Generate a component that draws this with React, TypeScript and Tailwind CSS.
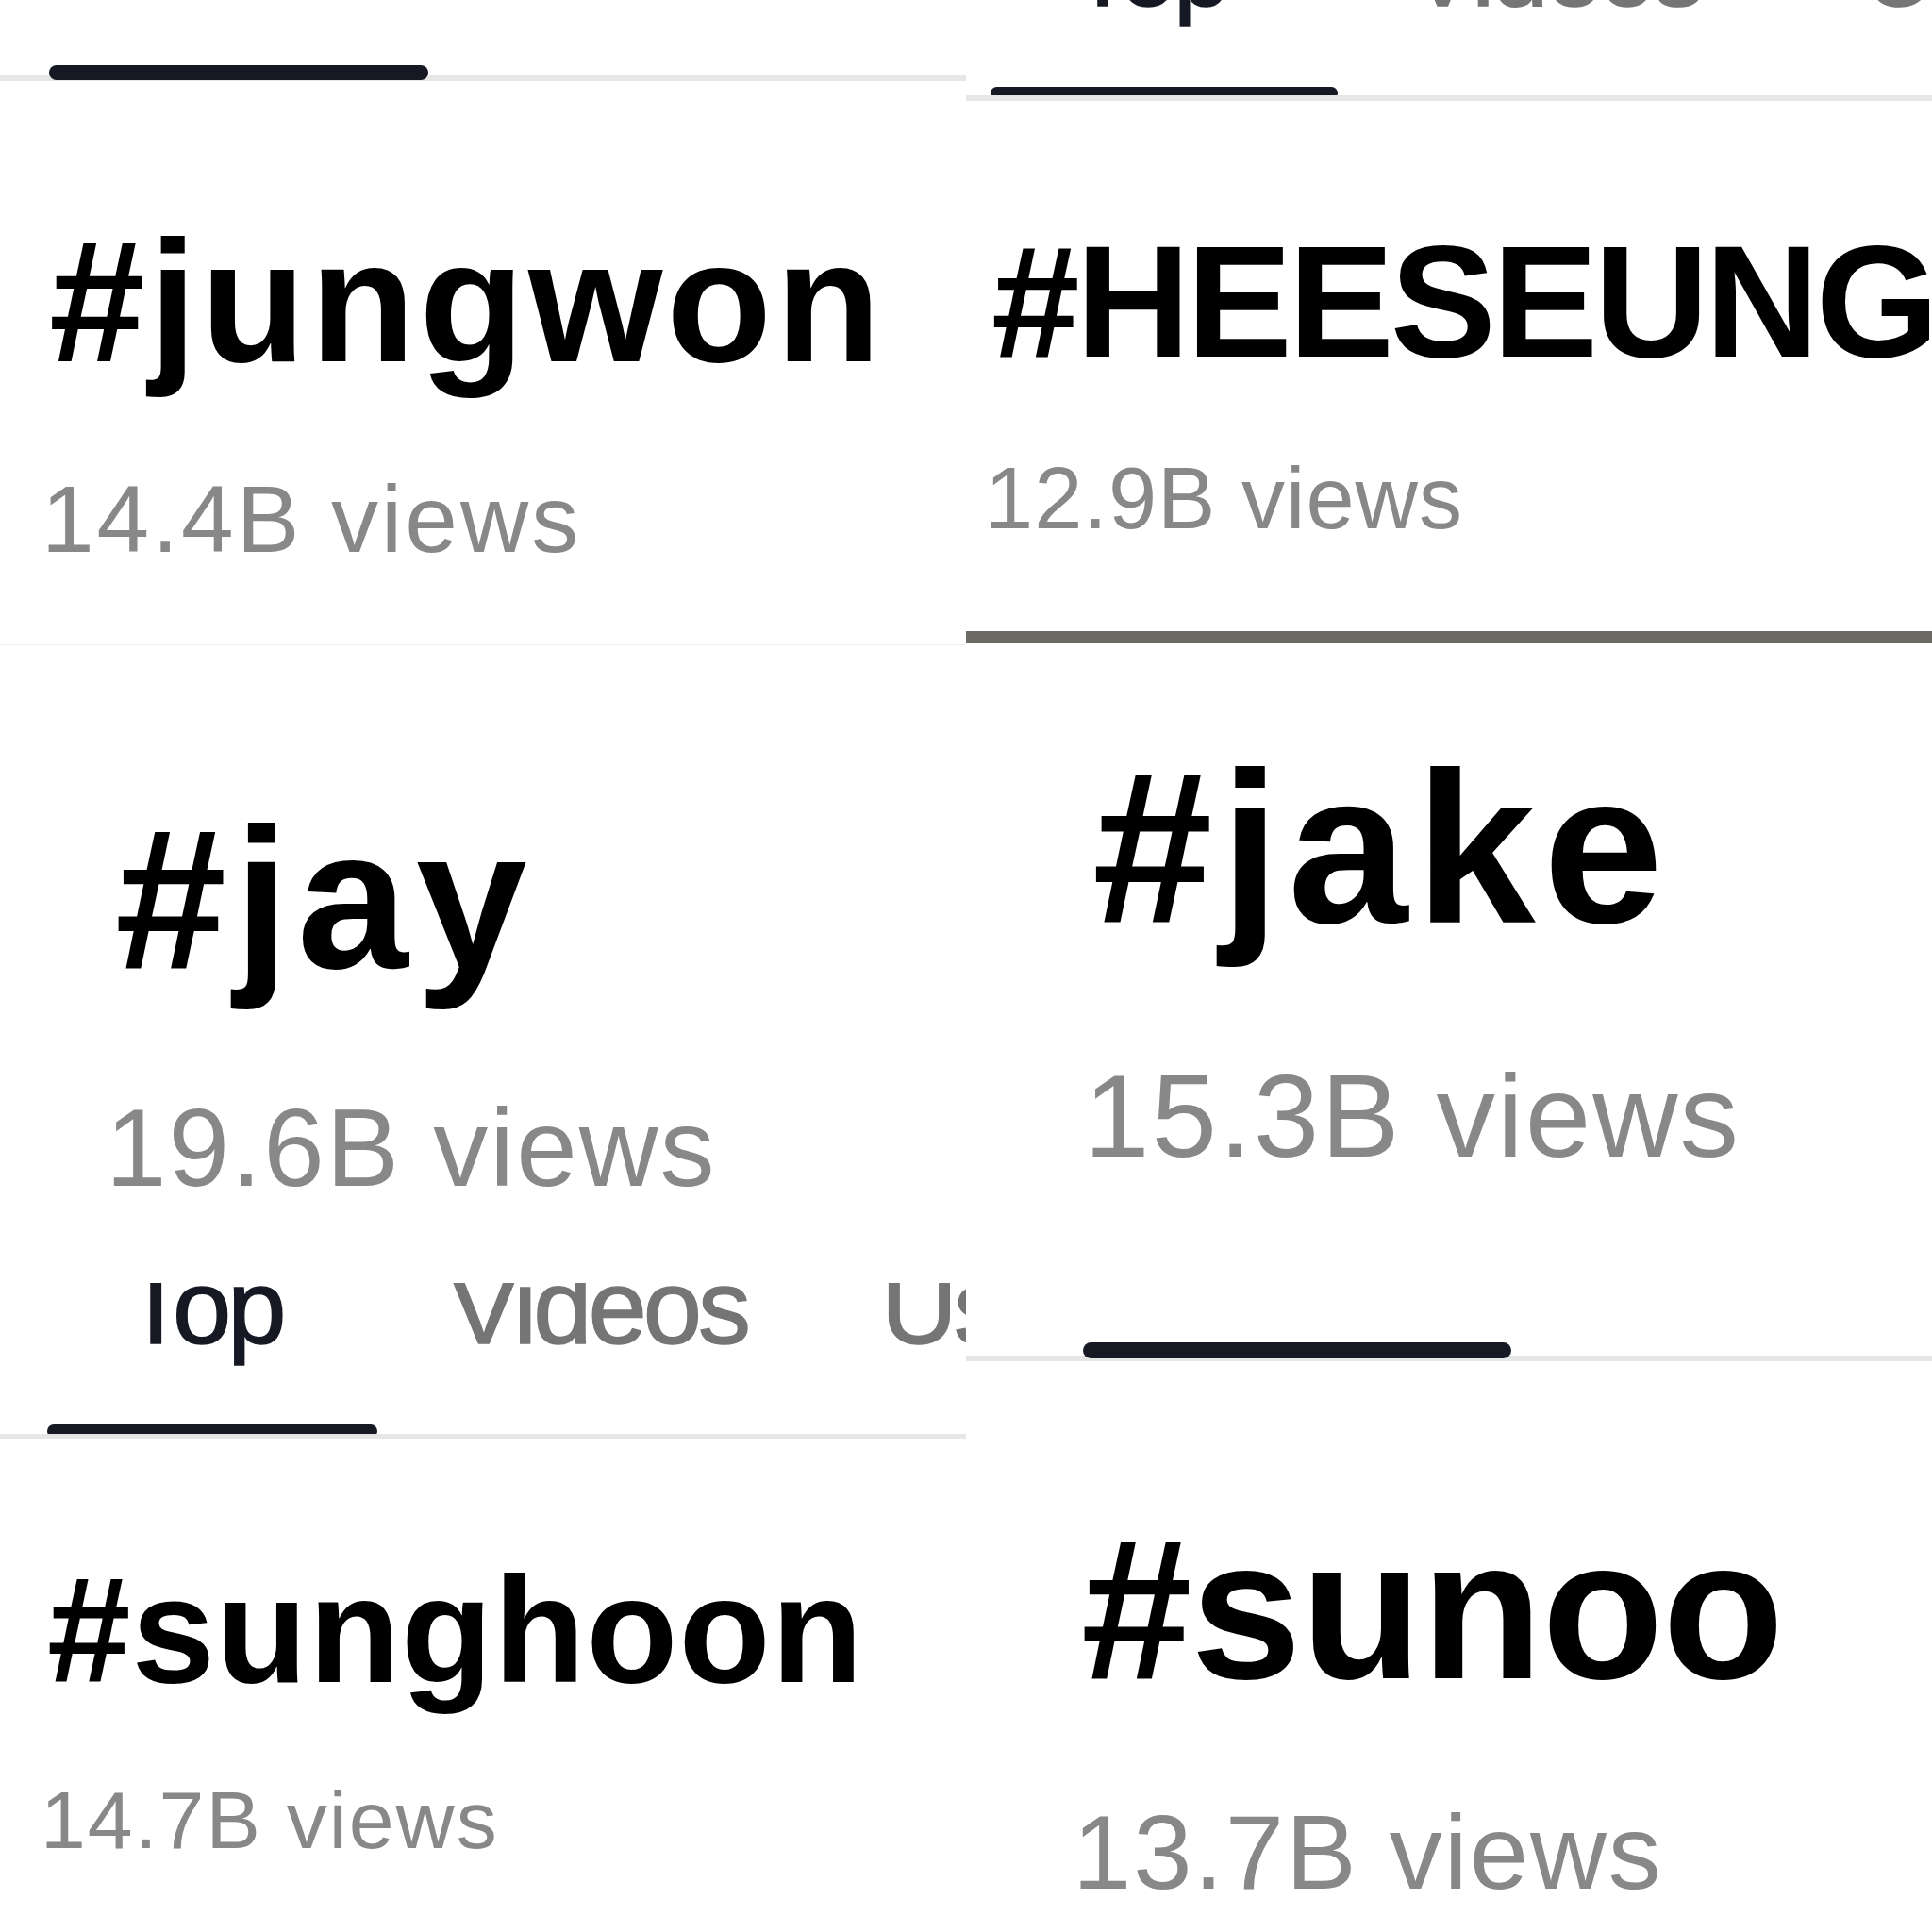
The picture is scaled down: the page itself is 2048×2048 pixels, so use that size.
import React from 'react';

const sans = "font-['Liberation_Sans',Arial,sans-serif]";

function Indicator({ className }: { className: string }) {
  return <div className={`absolute rounded-full bg-[#161823] ${className}`} />;
}

export default function App() {
  return (
    <div className={`w-[2048px] h-[2048px] bg-white grid grid-cols-2 overflow-hidden ${sans}`}>
      {/* left column */}
      <div className="flex flex-col overflow-hidden">
        <div className="h-[684px] border-b border-[#f0f0f0] flex flex-col">
          <div className="relative h-[86px] border-b-[6px] border-[#e6e6e6]">
            <Indicator className="left-[52px] top-[69px] w-[402px] h-[16px]" />
          </div>
          <h2 className="mt-[142px] pl-[52px] text-[183px] leading-none font-bold text-black tracking-[4px] whitespace-nowrap">#jungwon</h2>
          <p className="mt-[89px] pl-[44px] text-[100px] leading-none text-[#888] tracking-[3px] whitespace-nowrap">14.4B views</p>
        </div>

        <div className="h-[841px] flex flex-col">
          <h2 className="mt-[163px] pl-[122px] text-[212px] leading-none font-bold text-black tracking-[8px] whitespace-nowrap">#jay</h2>
          <p className="mt-[100px] pl-[112px] text-[116px] leading-none text-[#888] tracking-[2px] whitespace-nowrap">19.6B views</p>
          <div className="relative mt-[85px] h-[165px] overflow-hidden border-b-[5px] border-[#e6e6e6]">
            <div className="flex -mt-[30px] pl-[131px] text-[112px] leading-none tracking-[-4px] whitespace-nowrap">
              <span className="text-[#161823] [-webkit-text-stroke:1.5px_#161823]">Top</span>
              <span className="ml-[176px] text-[#757575] [-webkit-text-stroke:1.5px_#757575]">Videos</span>
              <span className="ml-[142px] text-[#757575] [-webkit-text-stroke:1.5px_#757575]">Users</span>
            </div>
            <Indicator className="left-[50px] top-[150px] w-[350px] h-[14px]" />
          </div>
        </div>

        <div className="h-[523px] flex flex-col">
          <h2 className="mt-[124px] pl-[50px] text-[159px] leading-none font-bold text-black tracking-[1px] whitespace-nowrap">#sunghoon</h2>
          <p className="mt-[78px] pl-[43px] text-[86px] leading-none text-[#888] tracking-[2px] whitespace-nowrap">14.7B views</p>
        </div>
      </div>

      {/* right column */}
      <div className="flex flex-col overflow-hidden">
        <div className="h-[682px] flex flex-col">
          <div className="relative h-[107px] overflow-hidden border-b-[6px] border-[#e6e6e6]">
            <div className="flex -mt-[85px] pl-[112px] text-[108px] leading-none tracking-[-3px] whitespace-nowrap">
              <span className="text-[#161823] [-webkit-text-stroke:1.5px_#161823]">Top</span>
              <span className="ml-[192px] text-[#757575] [-webkit-text-stroke:1.5px_#757575]">Videos</span>
              <span className="ml-[171px] text-[#757575] [-webkit-text-stroke:1.5px_#757575]">Users</span>
            </div>
            <Indicator className="left-[26px] top-[92px] w-[368px] h-[13px]" />
          </div>
          <h2 className="mt-[129px] pl-[27px] text-[168px] leading-none font-bold text-black tracking-[-4px] whitespace-nowrap">#HEESEUNG</h2>
          <p className="mt-[78px] pl-[20px] text-[92px] leading-none text-[#888] tracking-[1px] whitespace-nowrap">12.9B views</p>
          <div className="mt-auto h-[13px] bg-[#6b6a65]" />
        </div>

        <div className="h-[761px] flex flex-col">
          <h2 className="mt-[103px] pl-[134px] text-[229px] leading-none font-bold text-black tracking-[8px] whitespace-nowrap">#jake</h2>
          <p className="mt-[106px] pl-[125px] text-[125px] leading-none text-[#888] tracking-[2px] whitespace-nowrap">15.3B views</p>
          <div className="relative mt-auto h-[30px] border-b-[6px] border-[#e6e6e6]">
            <Indicator className="left-[124px] top-[10px] w-[454px] h-[17px]" />
          </div>
        </div>

        <div className="h-[605px] flex flex-col">
          <h2 className="mt-[158px] pl-[122px] text-[211px] leading-none font-bold text-black tracking-[-1px] whitespace-nowrap">#sunoo</h2>
          <p className="mt-[96px] pl-[113px] text-[112px] leading-none text-[#888] tracking-[2px] whitespace-nowrap">13.7B views</p>
        </div>
      </div>
    </div>
  );
}
